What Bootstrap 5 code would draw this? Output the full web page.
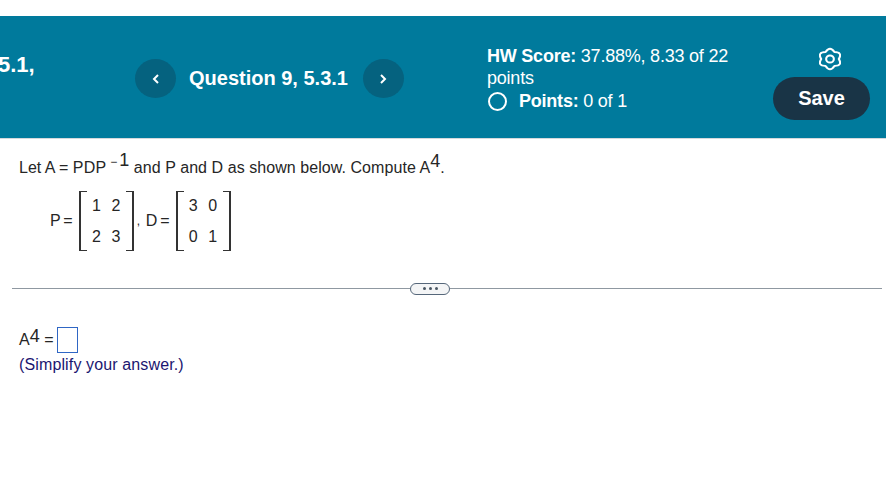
<!DOCTYPE html>
<html lang="en">
<head>
  <meta charset="UTF-8" />
  <meta name="viewport" content="width=device-width, initial-scale=1" />
  <title>Question 9, 5.3.1</title>
  <link href="https://cdn.jsdelivr.net/npm/bootstrap@5.3.0/dist/css/bootstrap.min.css" rel="stylesheet" />
  <style>
    html, body { height: 100%; overflow: hidden; }
    body { font-family: "Liberation Sans", Arial, sans-serif; font-size: 16px; color: #262626; background: #fff; }

    .hw-header { margin-top: 16px; height: 123px; background: #007a9c; border-bottom: 1px solid #d4d8dc; color: #fff; }
    .hw-title-cut { width: 137px; margin-left: -2px; padding-top: 35px; font-size: 22px; font-weight: 700; line-height: 28px; flex-shrink: 0; }
    .hw-nav { width: 269px; padding-top: 43px; flex-shrink: 0; }
    .hw-round { width: 41px; height: 39px; border-radius: 50%; background: #05627f; border: 0; padding: 0; flex-shrink: 0; }
    .hw-qname { font-size: 20px; font-weight: 700; line-height: 39px; margin: 0 15px 0 13px; white-space: nowrap; }
    .hw-score { width: 262px; margin-left: 83px; padding-top: 28.5px; font-size: 18px; line-height: 22.7px; letter-spacing: -0.22px; flex-shrink: 0; }
    .hw-ring { width: 19px; height: 19px; border: 2px solid #fff; border-radius: 50%; margin: 0 12px 0 1px; flex-shrink: 0; }
    .hw-tools { width: 97px; margin-left: 24px; padding-top: 28px; flex-shrink: 0; }
    .hw-gear { margin-left: 46px; height: 33px; padding-top: 3px; }
    .hw-gear svg { display: block; }
    .hw-save { width: 97px; height: 43px; border-radius: 22px; background: #193446; color: #fff; border: 0; font-size: 20px; font-weight: 700; padding: 0 0 1px; }

    .hw-body { padding: 17px 0 0 19px; }
    .hw-line { line-height: 24px; white-space: nowrap; }
    .hw-wide { letter-spacing: 0.2px; }
    .hw-tail { letter-spacing: 0.06px; }
    .hw-sup { font-size: 18px; position: relative; top: -6px; line-height: 0; }
    .hw-sup-minus { font-size: 12px; position: relative; top: -7px; line-height: 0; margin: 0 2px 0 4px; }
    .hw-sup-one { font-size: 18px; position: relative; top: -7px; line-height: 0; }
    .hw-matrices { margin: 11px 0 0 31px; height: 60px; word-spacing: -1.5px; }
    .hw-bracket { width: 55px; height: 60px; margin-left: 6px; position: relative; display: grid; grid-template-columns: 1fr 1fr; align-content: space-between; padding: 5px 8px 4px 8px; line-height: 20px; text-align: center; flex-shrink: 0; }
    .hw-bracket::before, .hw-bracket::after { content: ""; position: absolute; top: 0; bottom: 0; width: 8px; border: 1px solid #333; }
    .hw-bracket::before { left: 0; border-right: 0; border-left-width: 2px; }
    .hw-bracket::after { right: 0; border-left: 0; border-right-width: 2px; }
    .hw-comma { font-size: 12px; width: 6px; margin: 0 3px 0 3px; }

    .hw-divider { margin: 31px 4px 0 12px; height: 13px; }
    .hw-rule { flex: 1 1 0; height: 1px; background: #8f98a1; }
    .hw-rule-left { flex: 0 0 398px; }
    .hw-pill { width: 40px; height: 12px; border: 1px solid #56677a; border-radius: 6px; background: #f4f5f6; gap: 3px; }
    .hw-dot { width: 3px; height: 3px; border-radius: 50%; background: #4a5763; }

    .hw-answer { margin: 32px 0 0 19px; }
    .hw-sup-low { font-size: 18px; position: relative; top: -3px; line-height: 0; }
    .hw-box { width: 21px; height: 26px; border: 1px solid #2f66c4; margin-left: 4px; background: #fff; }
    .hw-hint { color: #1b1670; line-height: 24px; letter-spacing: 0.13px; }
  </style>
</head>
<body>

  <!-- Header band -->
  <header class="hw-header d-flex overflow-hidden">
    <div class="hw-title-cut">5.1,</div>
    <div class="hw-nav">
      <div class="d-flex align-items-center">
        <button type="button" class="hw-round d-flex align-items-center justify-content-center" aria-label="Previous">
          <svg width="10" height="12" viewBox="0 0 10 12"><path d="M7 2 3 6l4 4" fill="none" stroke="#fff" stroke-width="2"/></svg>
        </button>
        <span class="hw-qname">Question 9, 5.3.1</span>
        <button type="button" class="hw-round d-flex align-items-center justify-content-center" aria-label="Next">
          <svg width="10" height="12" viewBox="0 0 10 12"><path d="M3 2l4 4-4 4" fill="none" stroke="#fff" stroke-width="2"/></svg>
        </button>
      </div>
    </div>
    <div class="hw-score">
      <div><strong>HW Score:</strong> 37.88%, 8.33 of 22 points</div>
      <div class="d-flex align-items-center"><span class="hw-ring"></span><span><strong>Points:</strong> 0 of 1</span></div>
    </div>
    <div class="hw-tools">
      <div class="hw-gear">
        <svg width="22" height="24" viewBox="1 0 20 24" preserveAspectRatio="none" fill="none" stroke="#fff" stroke-width="1.900" stroke-linejoin="round">
          <path d="M7 5.070Q11 -1.500 15 5.070Q22.700 5.250 19 12Q22.700 18.750 15 18.930Q11 25.500 7 18.930Q-.7 18.750 3 12Q-.7 5.250 7 5.070Z"/>
          <circle cx="11" cy="12" r="3.500"/>
        </svg>
      </div>
      <button type="button" class="hw-save">Save</button>
    </div>
  </header>

  <!-- Question -->
  <main>
    <div class="hw-body">
      <div class="hw-line">Let A = <span class="hw-wide">PDP</span><span class="hw-sup-minus">&#8722;</span><span class="hw-sup-one">1</span><span class="hw-tail"> and P and D as shown below. Compute A</span><span class="hw-sup">4</span>.</div>
      <div class="hw-matrices d-flex align-items-center">
        <span>P =</span>
        <div class="hw-bracket"><span>1</span><span>2</span><span>2</span><span>3</span></div>
        <span class="hw-comma">,</span>
        <span>D =</span>
        <div class="hw-bracket"><span>3</span><span>0</span><span>0</span><span>1</span></div>
      </div>
    </div>

    <div class="hw-divider d-flex align-items-center">
      <div class="hw-rule hw-rule-left"></div>
      <div class="hw-pill d-flex align-items-center justify-content-center"><span class="hw-dot"></span><span class="hw-dot"></span><span class="hw-dot"></span></div>
      <div class="hw-rule"></div>
    </div>

    <div class="hw-answer">
      <div class="d-flex align-items-center">
        <span>A<span class="hw-sup-low">4</span> =</span><span class="hw-box"></span>
      </div>
      <div class="hw-hint">(Simplify your answer.)</div>
    </div>
  </main>

  <script src="https://cdn.jsdelivr.net/npm/bootstrap@5.3.0/dist/js/bootstrap.bundle.min.js"></script>
</body>
</html>
